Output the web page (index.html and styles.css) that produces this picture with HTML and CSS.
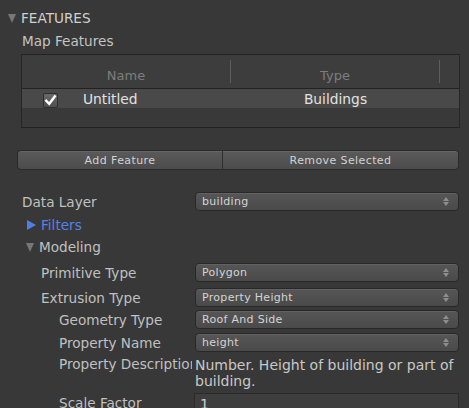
FILE: index.html
```
<!DOCTYPE html>
<html>
<head>
<meta charset="utf-8">
<link rel="stylesheet" href="styles.css">
</head>
<body>
<div class="panel">
  <div class="foldout top"><span class="tri down"></span><span class="title">FEATURES</span></div>
  <div class="sublabel">Map Features</div>
  <div class="table">
    <div class="thead">
      <div class="th">Name</div>
      <div class="sep"></div>
      <div class="th">Type</div>
      <div class="sep"></div>
      <div class="th-last"></div>
    </div>
    <div class="trow sel">
      <div class="cell-name">
        <span class="cb"><svg width="13" height="13" viewBox="0 0 13 13"><path d="M2.3 6.8 L5.2 9.8 L10.8 2.4" fill="none" stroke="#ffffff" stroke-width="2.4" stroke-linecap="square"/></svg></span>
        <span class="nm">Untitled</span>
      </div>
      <div class="cell-type">Buildings</div>
      <div class="cell-last"></div>
    </div>
    <div class="trow empty"></div>
  </div>
  <div class="btns"><div class="btn left">Add Feature</div><div class="btn right">Remove Selected</div></div>

  <div class="field r-data"><div class="lbl">Data Layer</div><div class="dd">building<span class="arr"></span></div></div>
  <div class="foldout sub blue"><span class="tri right-t"></span><span>Filters</span></div>
  <div class="foldout sub"><span class="tri down"></span><span>Modeling</span></div>
  <div class="field r-prim ind1"><div class="lbl">Primitive Type</div><div class="dd">Polygon<span class="arr"></span></div></div>
  <div class="field r-ext ind1"><div class="lbl">Extrusion Type</div><div class="dd">Property Height<span class="arr"></span></div></div>
  <div class="field r-geo ind2"><div class="lbl">Geometry Type</div><div class="dd">Roof And Side<span class="arr"></span></div></div>
  <div class="field r-pn ind2"><div class="lbl">Property Name</div><div class="dd">height<span class="arr"></span></div></div>
  <div class="field r-desc ind2"><div class="lbl">Property Description</div><div class="desc">Number. Height of building or part of building.</div></div>
  <div class="field r-scale ind2"><div class="lbl">Scale Factor</div><div class="inp">1</div></div>
</div>
</body>
</html>
```
FILE: styles.css
```
html, body {
  margin: 0;
  padding: 0;
  background: #383838;
  overflow: hidden;
}
body {
  font-family: "DejaVu Sans", "Liberation Sans", sans-serif;
  color: #c0c0c0;
  font-size: 13.6px;
  width: 469px;
  height: 408px;
}
.panel {
  display: flex;
  flex-direction: column;
}
.foldout {
  display: flex;
  align-items: center;
  height: 20px;
}
.foldout.top {
  margin-top: 8px;
  padding-left: 8px;
  gap: 5px;
  color: #d0d0d0;
}
.tri {
  display: inline-block;
  width: 0;
  height: 0;
}
.tri.down {
  border-left: 4.5px solid transparent;
  border-right: 4.5px solid transparent;
  border-top: 9px solid #777777;
  margin-top: 1px;
}
.tri.right-t {
  border-top: 5px solid transparent;
  border-bottom: 5px solid transparent;
  border-left: 9px solid #4f7fe6;
}
.sublabel {
  height: 20px;
  line-height: 20px;
  margin-top: 3px;
  padding-left: 22px;
  color: #c4c4c4;
}
.table {
  margin-top: 3px;
  margin-left: 21px;
  width: 437px;
  border-top: 1px solid #222222;
  border-bottom: 1px solid #222222;
  border-left: 1px solid #262626;
  border-right: 1px solid #262626;
  background: #393939;
}
.thead {
  display: flex;
  align-items: center;
  height: 33px;
  background: #3d3d3d;
  border-bottom: 1px solid #222222;
}
.th {
  width: 208px;
  text-align: center;
  color: #7d7d7d;
  font-size: 13px;
  padding-top: 7px;
}
.sep {
  width: 1px;
  height: 23px;
  background: #5e5e5e;
}
.th-last { flex: 1; }
.trow {
  display: flex;
  align-items: center;
  height: 19px;
}
.trow.sel {
  background: #494949;
  color: #e2e2e2;
  font-size: 13.8px;
}
.cell-name {
  width: 209px;
  display: flex;
  align-items: center;
}
.cb {
  margin-left: 21px;
  width: 15px;
  height: 15px;
  margin-top: 3px;
  border-radius: 2px;
  background: linear-gradient(#6a6a6a, #4e4e4e);
  border: 1px solid #2e2e2e;
  box-sizing: border-box;
  display: flex;
  align-items: center;
  justify-content: center;
}
.nm { margin-left: 25px; }
.cell-type {
  width: 209px;
  text-align: center;
}
.cell-last { flex: 1; }
.trow.empty { height: 19px; }

.btns {
  display: flex;
  margin-top: 22px;
  margin-left: 17px;
  width: 442px;
  height: 20px;
}
.btn {
  flex: 1;
  display: flex;
  align-items: center;
  justify-content: center;
  font-size: 11px;
  letter-spacing: 0.4px;
  color: #d2d2d2;
  background: linear-gradient(#5a5a5a, #4c4c4c);
  border: 1px solid #2a2a2a;
  box-sizing: border-box;
  box-shadow: inset 0 1px 0 #666666;
}
.btn.left {
  flex: 0 0 206px;
  border-radius: 4px 0 0 4px;
  border-right: 1px solid #2e2e2e;
}
.btn.right {
  border-radius: 0 4px 4px 0;
  border-left: none;
}
.field {
  display: grid;
  grid-template-columns: 195px 264px;
  align-items: center;
}
.field .lbl {
  white-space: nowrap;
  overflow: hidden;
  padding-left: 22px;
}
.field.ind1 .lbl { padding-left: 41px; }
.field.ind2 .lbl { padding-left: 59px; }
.dd {
  position: relative;
  height: 19px;
  box-sizing: border-box;
  border: 1px solid #282828;
  border-radius: 4px;
  background: linear-gradient(#565656, #4a4a4a);
  box-shadow: inset 0 1px 0 #626262;
  font-size: 11px;
  color: #d4d4d4;
  padding-left: 6px;
  line-height: 17px;
  letter-spacing: 0.3px;
}
.arr {
  position: absolute;
  right: 9px;
  top: 4px;
  width: 6px;
  height: 9px;
}
.arr::before, .arr::after {
  content: "";
  position: absolute;
  left: 0;
  border-left: 3px solid transparent;
  border-right: 3px solid transparent;
}
.arr::before {
  top: 0;
  border-bottom: 4px solid #8e8e8e;
}
.arr::after {
  top: 5px;
  border-top: 4px solid #8e8e8e;
}
.r-data { margin-top: 22px; height: 19px; }
.foldout.sub {
  height: 20px;
  padding-left: 26px;
  gap: 5px;
}
.foldout.sub.blue { margin-top: 4px; color: #5282ec; }
.foldout.sub.blue .tri { margin-left: 1px; }
.foldout.sub:not(.blue) { margin-top: 2px; }
.r-prim { margin-top: 6px; height: 19px; }
.r-ext { margin-top: 6px; height: 19px; }
.r-geo { margin-top: 3px; height: 19px; }
.r-pn { margin-top: 4px; height: 19px; }
.r-desc { margin-top: 4px; align-items: start; grid-template-columns: 192px 3px 264px; }
.r-desc .lbl { line-height: 17px; }
.desc {
  grid-column: 3;
  font-size: 14px;
  line-height: 16px;
  color: #c8c8c8;
  padding-top: 1px;
}
.r-scale { margin-top: 0; height: 20px; }
.r-scale .lbl { padding-top: 4px; }
.inp {
  height: 20px;
  box-sizing: border-box;
  border: 1px solid #2a2a2a;
  border-bottom: none;
  background: #3e3e3e;
  font-size: 14px;
  padding-left: 5px;
  line-height: 20px;
  color: #d0d0d0;
  margin-top: 4px;
  width: 265px;
  margin-left: -1px;
}
```
